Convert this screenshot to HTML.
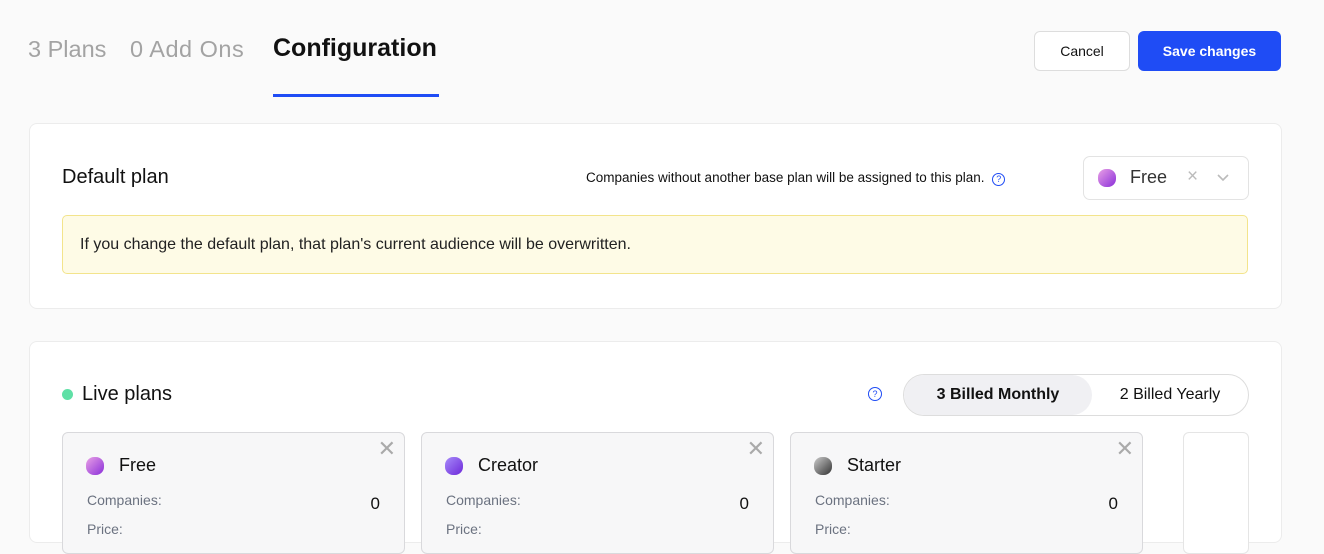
<!DOCTYPE html><html><head><style>
body{margin:0;width:1324px;height:526px;overflow:hidden;background:#fafafa;font-family:"Liberation Sans",sans-serif;position:relative;color:#111}
.a{position:absolute}
.tab{position:absolute;top:36px;font-size:23.5px;color:#a3a3a3}
.card{position:absolute;left:29px;width:1251px;background:#fff;border:1px solid #ececec;border-radius:8px}
.pc{position:absolute;top:432px;height:120px;background:#f7f7f8;border:1px solid #d9d9dc;border-radius:6px}
.dot{position:absolute;width:18px;height:18px;border-radius:45%}
.lbl{position:absolute;left:24px;top:59px;font-size:14px;color:#6b7280}
.x{position:absolute;right:8px;top:3px;font-size:22px;color:#aaa}
.pr{position:absolute;left:24px;top:88px;font-size:14px;color:#6b7280}
</style></head><body>
<div class="tab" style="left:28px">3 Plans</div>
<div class="tab" style="left:130px;letter-spacing:0.5px">0 Add Ons</div>
<div class="tab" style="left:273px;top:34px;font-size:25px;color:#111;font-weight:bold">Configuration</div>
<div class="a" style="left:273px;top:94px;width:166px;height:3px;background:#1f4cf5"></div>
<div class="a" style="left:1034px;top:31px;width:94px;height:38px;border:1px solid #ddd;border-radius:6px;background:#fff;font-size:14px;text-align:center;line-height:38px">Cancel</div>
<div class="a" style="left:1138px;top:31px;width:143px;height:40px;border-radius:6px;background:#1f4cf5;color:#fff;font-size:14px;font-weight:bold;text-align:center;line-height:40px">Save changes</div>
<div class="card" style="top:123px;height:184px">
<div class="a" style="left:32px;top:42px;font-size:20px">Default plan</div>
<div class="a" style="left:556px;top:46px;font-size:13.5px">Companies without another base plan will be assigned to this plan. <span style="display:inline-block;width:11px;height:11px;border:1.3px solid #1f4cf5;border-radius:50%;color:#1f4cf5;font-size:9px;text-align:center;line-height:11px;margin-left:4px">?</span></div>
<div class="a" style="left:1053px;top:32px;width:164px;height:42px;border:1px solid #e3e3e3;border-radius:7px">
<div class="dot" style="left:14px;top:12px;background:linear-gradient(135deg,#e9a0e6,#8b2fd9)"></div>
<div class="a" style="left:46px;top:10px;font-size:18px;color:#333">Free</div>
<div class="a" style="left:103px;top:9px;font-size:19px;color:#bbb">×</div>
<svg class="a" style="left:133px;top:17px" width="12" height="8"><path d="M1 1l5 5 5-5" stroke="#bbb" stroke-width="1.6" fill="none"/></svg></div>
<div class="a" style="left:32px;top:91px;width:1184px;height:57px;background:#fefbe6;border:1.5px solid #f3e48c;border-radius:5px">
<div class="a" style="left:17px;top:20px;font-size:16px;color:#222">If you change the default plan, that plan's current audience will be overwritten.</div></div>
</div>
<div class="card" style="top:341px;height:200px">
<div class="a" style="left:32px;top:47px;width:11px;height:11px;border-radius:50%;background:#5fe0a6"></div>
<div class="a" style="left:52px;top:41px;font-size:20px">Live plans</div>
<div class="a" style="left:838px;top:45px;width:12px;height:12px;border:1.3px solid #1f4cf5;border-radius:50%;color:#1f4cf5;font-size:9px;text-align:center;line-height:12px">?</div>
<div class="a" style="left:873px;top:32px;width:344px;height:40px;border:1px solid #ddd;border-radius:21px;overflow:hidden">
<div class="a" style="left:0;top:0;width:188px;height:40px;background:#f0f0f3;border-radius:20px;font-size:16px;font-weight:bold;text-align:center;line-height:40px">3 Billed Monthly</div>
<div class="a" style="left:188px;top:0;width:156px;height:40px;font-size:16px;text-align:center;line-height:40px">2 Billed Yearly</div></div>
</div>
<div class="pc" style="left:62px;width:341px"><div class="dot" style="left:23px;top:24px;background:linear-gradient(135deg,#e9a0e6,#8b2fd9)"></div><div class="a" style="left:56px;top:22px;font-size:18px">Free</div><div class="x">✕</div><div class="lbl">Companies:</div><div class="a" style="right:24px;top:61px;font-size:17px">0</div><div class="pr">Price:</div></div>
<div class="pc" style="left:421px;width:351px"><div class="dot" style="left:23px;top:24px;background:linear-gradient(135deg,#a78bfa,#6d28d9)"></div><div class="a" style="left:56px;top:22px;font-size:18px">Creator</div><div class="x">✕</div><div class="lbl">Companies:</div><div class="a" style="right:24px;top:61px;font-size:17px">0</div><div class="pr">Price:</div></div>
<div class="pc" style="left:790px;width:351px"><div class="dot" style="left:23px;top:24px;background:linear-gradient(135deg,#ccc,#333)"></div><div class="a" style="left:56px;top:22px;font-size:18px">Starter</div><div class="x">✕</div><div class="lbl">Companies:</div><div class="a" style="right:24px;top:61px;font-size:17px">0</div><div class="pr">Price:</div></div>
<div class="pc" style="left:1183px;width:64px;background:#fff;border-color:#e5e5e5"></div>
</body></html>
